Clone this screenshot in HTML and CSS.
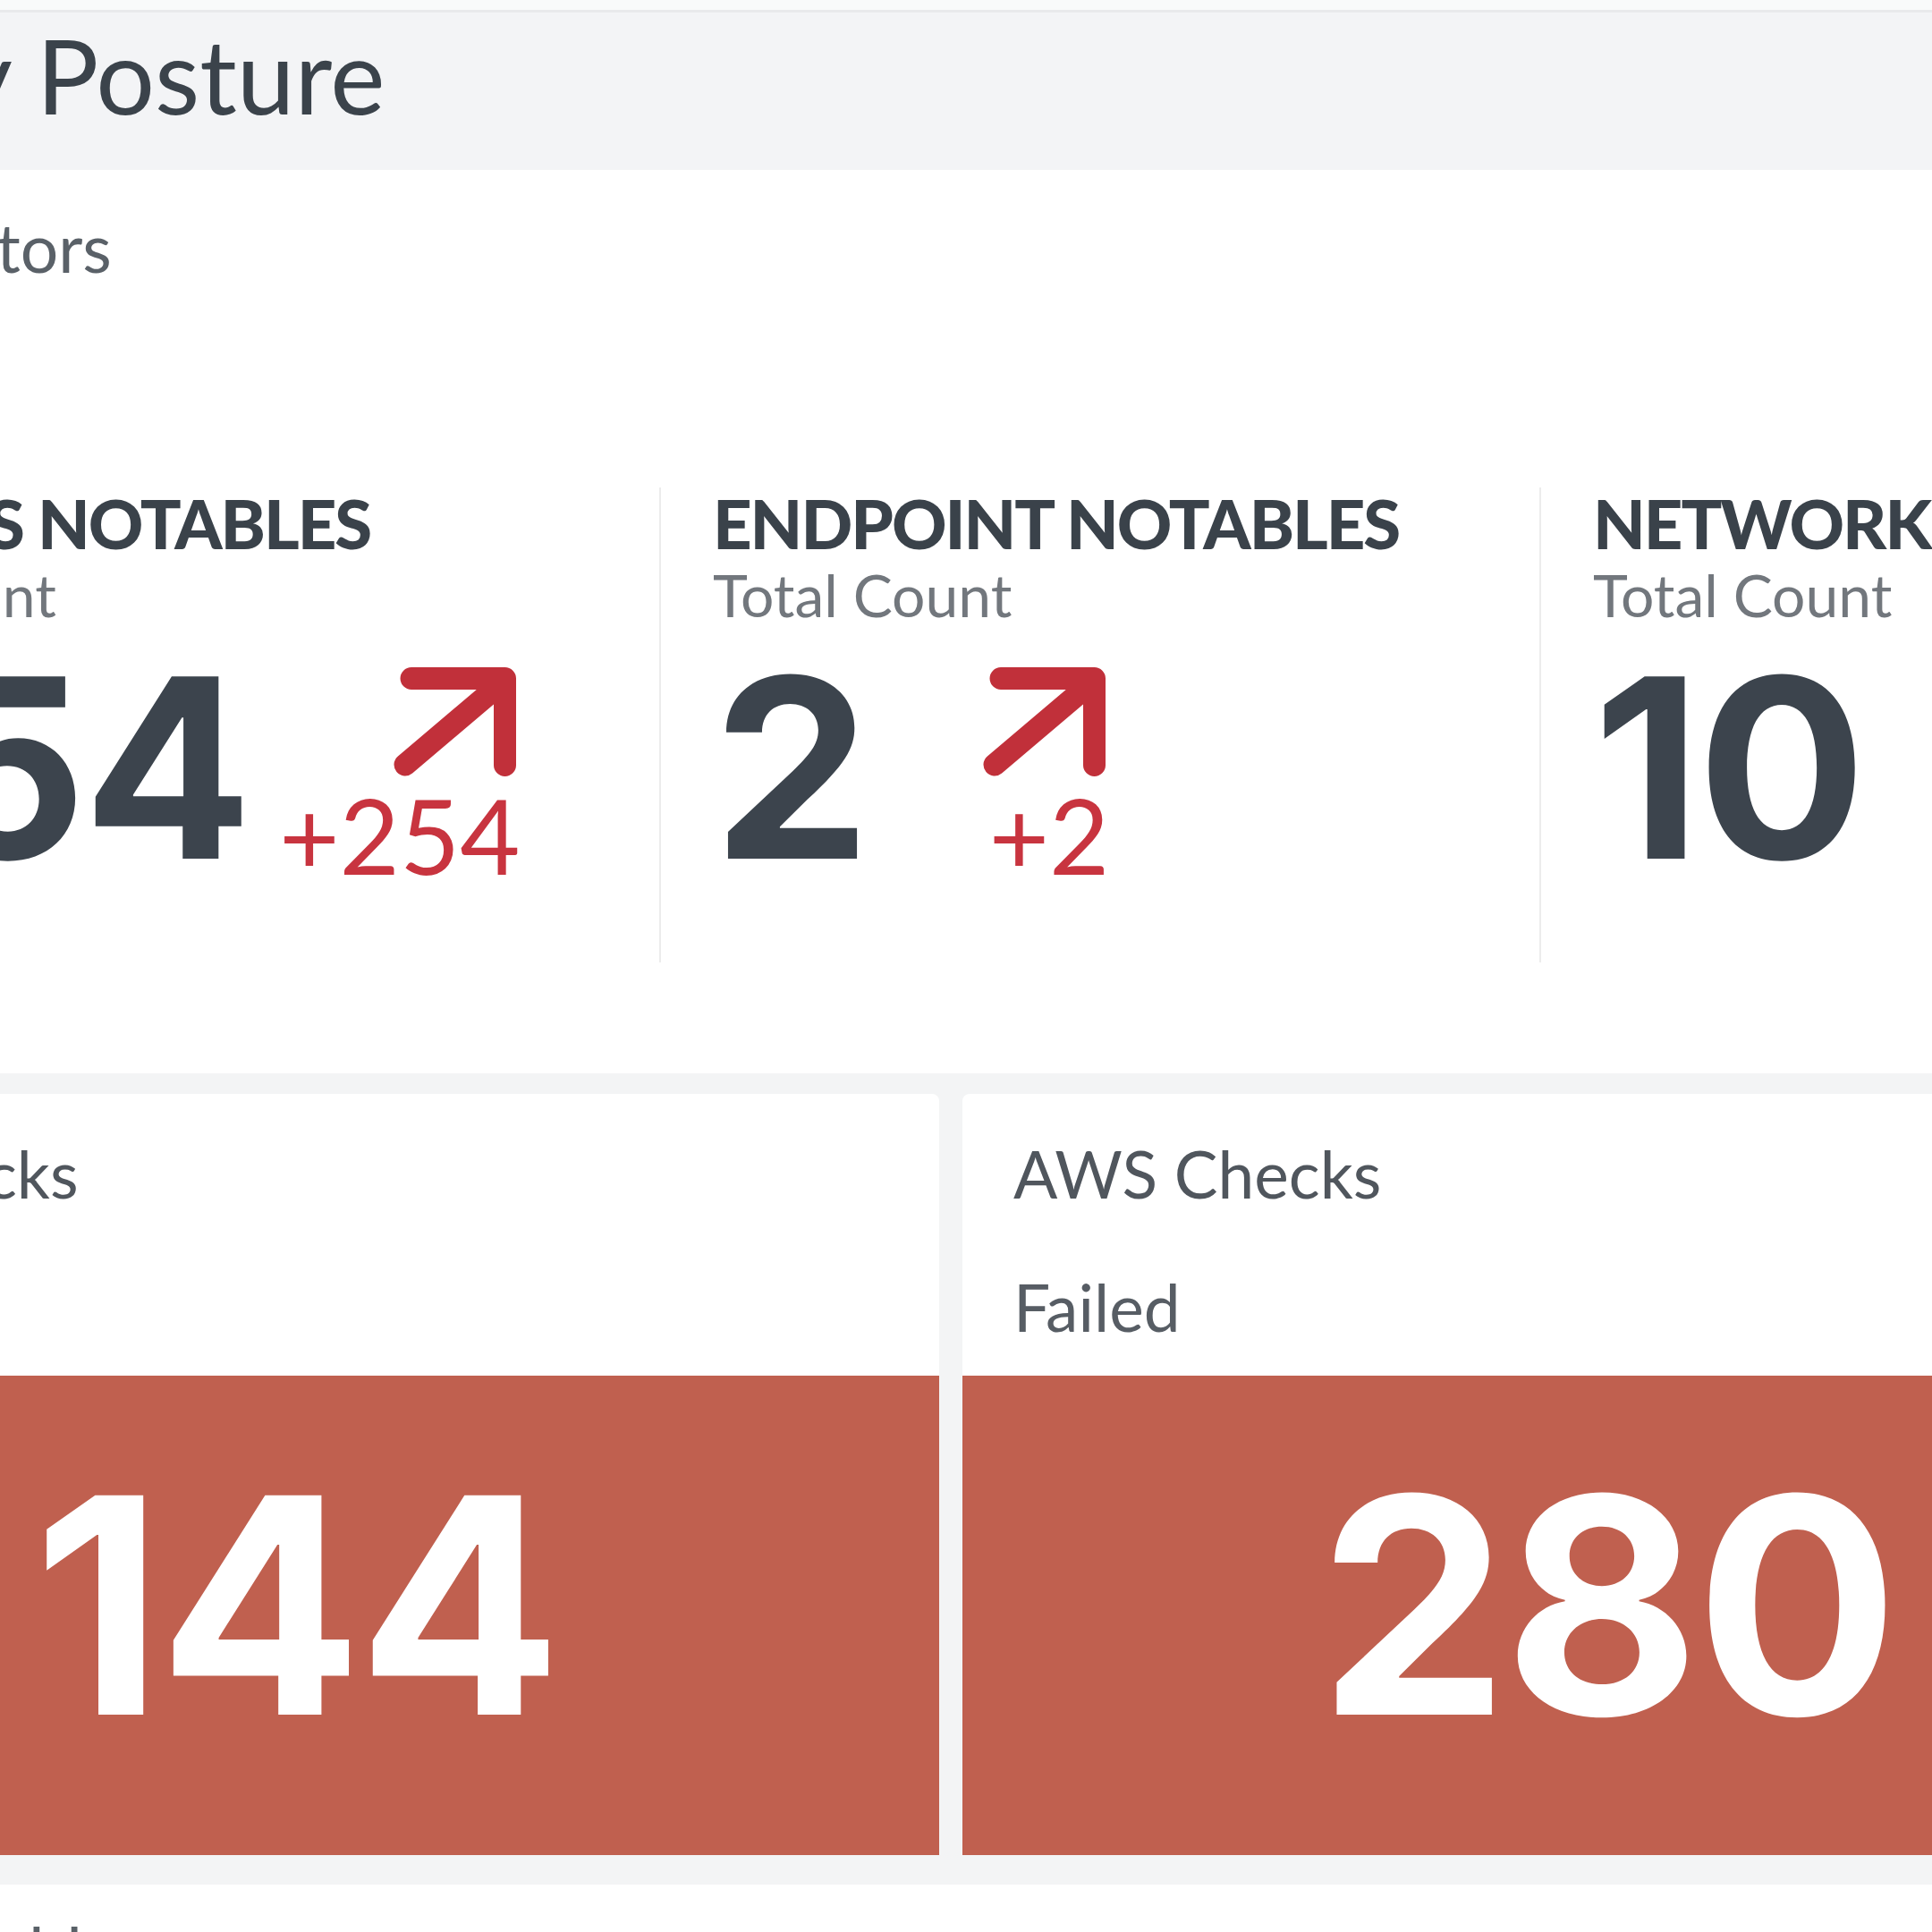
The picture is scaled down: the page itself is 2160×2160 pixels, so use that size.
FILE: index.html
```html
<!DOCTYPE html>
<html lang="en">
<head>
<meta charset="utf-8">
<title>Security Posture</title>
<link rel="stylesheet" href="styles.css">
</head>
<body>
<div class="topbar"></div>
<header class="page-header">
  <h1 class="page-title"><span class="cut-title">y Posture</span></h1>
</header>

<section class="panel kpi-panel">
  <h2 class="panel-title"><span class="cut-panel">tors</span></h2>
  <div class="kpi-row">
    <div class="kpi kpi--first">
      <div class="kpi-label"><span class="cut-label">S NOTABLES</span></div>
      <div class="kpi-sub"><span class="cut-sub">unt</span></div>
      <div class="kpi-values">
        <div class="kpi-number"><span class="cut-number">54</span></div>
        <div class="kpi-delta kpi-delta--wide">
          <svg class="trend-arrow" viewBox="0 0 142 128" aria-hidden="true"><path d="M21 13.5H125.5V110.5M14 110L119 21"/></svg>
          <div class="delta-value">+254</div>
        </div>
      </div>
    </div>
    <div class="kpi">
      <div class="kpi-label">ENDPOINT NOTABLES</div>
      <div class="kpi-sub">Total Count</div>
      <div class="kpi-values">
        <div class="kpi-number">2</div>
        <div class="kpi-delta kpi-delta--narrow">
          <svg class="trend-arrow" viewBox="0 0 142 128" aria-hidden="true"><path d="M21 13.5H125.5V110.5M14 110L119 21"/></svg>
          <div class="delta-value">+2</div>
        </div>
      </div>
    </div>
    <div class="kpi kpi--last">
      <div class="kpi-label">NETWORK</div>
      <div class="kpi-sub">Total Count</div>
      <div class="kpi-values">
        <div class="kpi-number">10</div>
      </div>
    </div>
  </div>
</section>

<section class="cards">
  <div class="card card--left">
    <div class="card-title"><span class="cut-card">cks</span></div>
    <div class="card-value">144</div>
  </div>
  <div class="card">
    <div class="card-title">AWS Checks</div>
    <div class="card-sub">Failed</div>
    <div class="card-value">280</div>
  </div>
</section>

<section class="panel next-panel">
  <h2 class="panel-title">ld</h2>
</section>
</body>
</html>
```

FILE: styles.css
```css
html, body {
  margin: 0;
  padding: 0;
  width: 2160px;
  height: 2160px;
  overflow: hidden;
  background: #ffffff;
  font-family: "Lato", "Liberation Sans", sans-serif;
  color: #3c444c;
}

.topbar {
  height: 11px;
  background: #f9fafa;
  border-bottom: 3px solid #e9eaec;
}

.page-header {
  height: 176px;
  box-sizing: border-box;
  padding-top: 12px;
  background: #f3f4f6;
  box-shadow: 0 2px 4px rgba(0, 0, 0, 0.02);
  white-space: nowrap;
}

.page-title {
  margin: 0;
  font-size: 116px;
  line-height: 1;
  font-weight: 400;
  color: #3b434b;
}

.cut-title { margin-left: -46px; }

.panel { background: #ffffff; }

.kpi-panel {
  padding: 49px 0 124px;
}

.panel-title {
  margin: 0;
  font-size: 75px;
  line-height: 1;
  font-weight: 400;
  color: #5a6168;
  white-space: nowrap;
}

.cut-panel { margin-left: -4px; }

.kpi-row {
  display: flex;
  margin-top: 231px;
}

.kpi {
  flex: 0 0 984px;
  box-sizing: border-box;
  padding: 2px 0 77px 58px;
  border-left: 2px solid #ececec;
  white-space: nowrap;
}

.kpi--first {
  flex-basis: 737px;
  padding-left: 0;
  border-left: 0;
}

.kpi--last { flex: 1 0 auto; }

.kpi-label {
  font-size: 76px;
  line-height: 1;
  font-weight: 900;
  letter-spacing: -2px;
  color: #3a424a;
}

.kpi-sub {
  margin-top: 9px;
  font-size: 66px;
  line-height: 1;
  color: #72777d;
}

.cut-label { margin-left: -14px; }
.cut-sub { margin-left: -34px; }
.cut-number { margin-left: -82px; }

.kpi-values {
  display: flex;
  align-items: flex-start;
  margin-top: 21px;
}

.kpi-number {
  font-family: "Inter", "Lato", sans-serif;
  font-size: 280px;
  line-height: 1;
  font-weight: 700;
  letter-spacing: -4px;
  color: #3c444d;
}

.kpi-delta {
  display: flex;
  flex-direction: column;
  align-items: flex-end;
  margin-top: 26px;
}

.kpi-delta--wide { margin-left: 34px; }
.kpi-delta--narrow { margin-left: 129px; }

.trend-arrow {
  width: 142px;
  height: 128px;
  margin-bottom: 3px;
  fill: none;
  stroke: #c1303a;
  stroke-width: 25;
  stroke-linecap: round;
  stroke-linejoin: round;
}

.delta-value {
  font-size: 116px;
  line-height: 1;
  font-weight: 400;
  color: #c8343f;
}

.cards {
  display: flex;
  gap: 26px;
  margin-left: -390px;
  padding: 23px 0 33px;
  background: #f3f4f5;
}

.card {
  flex: 0 0 1440px;
  display: flex;
  flex-direction: column;
  box-sizing: border-box;
  padding-top: 53px;
  background: #ffffff;
  border-radius: 8px 8px 0 0;
  white-space: nowrap;
}

.card-title,
.card-sub {
  padding-left: 57px;
  font-size: 73px;
  line-height: 1;
  color: #50565d;
}

.card-sub {
  margin-top: 76px;
  color: #575d64;
}

.cut-card { margin-left: 317px; }

.card-value {
  margin-top: auto;
  height: 536px;
  box-sizing: border-box;
  padding-top: 88px;
  background: #c0604f;
  color: #ffffff;
  text-align: center;
  font-family: "Inter", "Lato", sans-serif;
  font-size: 337px;
  line-height: 1;
  font-weight: 700;
  letter-spacing: -5px;
}

.card-sub + .card-value { margin-top: 40px; }

.next-panel {
  padding: 37px 0 0 32px;
}
```
